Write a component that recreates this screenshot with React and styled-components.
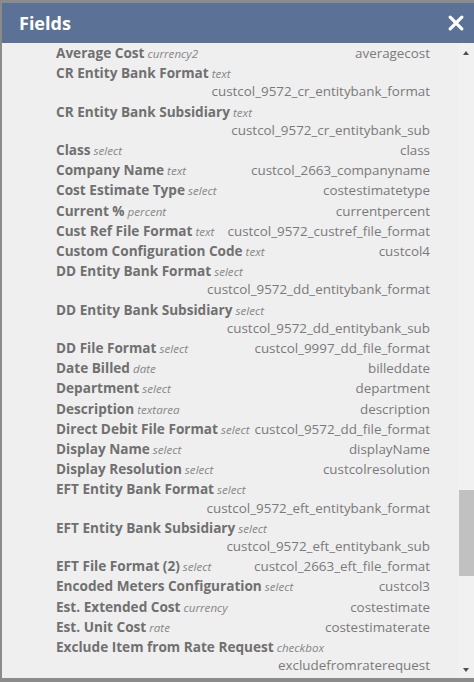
import React from "react";
import styled, { createGlobalStyle } from "styled-components";

const GlobalStyle = createGlobalStyle`
    html, body {
        margin: 0;
        padding: 0;
        background: #8b8b8b;
        font-family: "Open Sans", "Noto Sans", sans-serif;
    }
`;

const fields = [
    { name: "Average Cost", type: "currency2", id: "averagecost" },
    { name: "CR Entity Bank Format", type: "text", id: "custcol_9572_cr_entitybank_format" },
    { name: "CR Entity Bank Subsidiary", type: "text", id: "custcol_9572_cr_entitybank_sub" },
    { name: "Class", type: "select", id: "class" },
    { name: "Company Name", type: "text", id: "custcol_2663_companyname" },
    { name: "Cost Estimate Type", type: "select", id: "costestimatetype" },
    { name: "Current %", type: "percent", id: "currentpercent" },
    { name: "Cust Ref File Format", type: "text", id: "custcol_9572_custref_file_format" },
    { name: "Custom Configuration Code", type: "text", id: "custcol4" },
    { name: "DD Entity Bank Format", type: "select", id: "custcol_9572_dd_entitybank_format" },
    { name: "DD Entity Bank Subsidiary", type: "select", id: "custcol_9572_dd_entitybank_sub" },
    { name: "DD File Format", type: "select", id: "custcol_9997_dd_file_format" },
    { name: "Date Billed", type: "date", id: "billeddate" },
    { name: "Department", type: "select", id: "department" },
    { name: "Description", type: "textarea", id: "description" },
    { name: "Direct Debit File Format", type: "select", id: "custcol_9572_dd_file_format" },
    { name: "Display Name", type: "select", id: "displayName" },
    { name: "Display Resolution", type: "select", id: "custcolresolution" },
    { name: "EFT Entity Bank Format", type: "select", id: "custcol_9572_eft_entitybank_format" },
    { name: "EFT Entity Bank Subsidiary", type: "select", id: "custcol_9572_eft_entitybank_sub" },
    { name: "EFT File Format (2)", type: "select", id: "custcol_2663_eft_file_format" },
    { name: "Encoded Meters Configuration", type: "select", id: "custcol3" },
    { name: "Est. Extended Cost", type: "currency", id: "costestimate" },
    { name: "Est. Unit Cost", type: "rate", id: "costestimaterate" },
    { name: "Exclude Item from Rate Request", type: "checkbox", id: "excludefromraterequest" },
];

const Frame = styled.div`
    height: 682px;
    box-sizing: border-box;
    padding: 3px 0 4px 2px;
    display: flex;
`;

const Panel = styled.div`
    flex: 1;
    display: flex;
    flex-direction: column;
    background: #efefef;
    overflow: hidden;
`;

const Header = styled.div`
    height: 40px;
    flex-shrink: 0;
    background: #5b7296;
    display: flex;
    align-items: center;
    justify-content: space-between;
    padding: 0 9px 0 17px;
`;

const Title = styled.h1`
    margin: 0;
    color: #fff;
    font-size: 18px;
    font-weight: 700;
`;

const CloseButton = styled.button`
    border: 0;
    background: none;
    padding: 0;
    width: 18px;
    height: 18px;
    display: flex;
    align-items: center;
    justify-content: center;
    cursor: pointer;
`;

const Body = styled.div`
    flex: 1;
    display: flex;
    min-height: 0;
`;

const List = styled.div`
    flex: 1;
    overflow: hidden;
    padding: 0 28px 0 54px;
`;

const Row = styled.div`
    display: flex;
    flex-wrap: wrap;
    align-items: baseline;
    padding: 1px 0;
    line-height: 18.2px;
`;

const Label = styled.span`
    color: #707070;
    font-size: 13.6px;
    font-weight: 700;
    line-height: 18.2px;
`;

const Type = styled.span`
    color: #868686;
    font-size: 11.6px;
    font-style: italic;
    font-weight: 400;
    line-height: 1;
    margin-left: 3px;
`;

const Value = styled.span`
    margin-left: auto;
    padding-left: 2px;
    color: #7a7a7a;
    font-size: 13.4px;
    line-height: 18.2px;
`;

const Scrollbar = styled.div`
    width: 16px;
    flex-shrink: 0;
    background: #f1f1f1;
    display: flex;
    flex-direction: column;
    align-items: center;
`;

const Arrow = styled.div`
    width: 0;
    height: 0;
    margin: 8px 0 6px;
    border-left: 3.5px solid transparent;
    border-right: 3.5px solid transparent;
    ${(props) => props.down
        ? "border-top: 4px solid #505050;"
        : "border-bottom: 4px solid #505050;"}
`;

const Track = styled.div`
    flex: 1;
    align-self: stretch;
    display: flex;
    flex-direction: column;
    padding-top: ${(props) => props.offset}px;
`;

const Thumb = styled.div`
    height: 86px;
    margin-left: 1px;
    background: #c1c1c1;
`;

export default function App() {
    return (
        <Frame>
            <GlobalStyle />
            <Panel>
                <Header>
                    <Title>Fields</Title>
                    <CloseButton aria-label="Close">
                        <svg width="16" height="16" viewBox="0 0 16 16">
                            <path d="M2.2 2.2 L13.8 13.8 M13.8 2.2 L2.2 13.8" stroke="#fff" strokeWidth="3.2" strokeLinecap="round" />
                        </svg>
                    </CloseButton>
                </Header>
                <Body>
                    <List>
                        {fields.map((f) => (
                            <Row key={f.id + f.name}>
                                <Label>
                                    {f.name}
                                    <Type>{f.type}</Type>
                                </Label>
                                <Value>{f.id}</Value>
                            </Row>
                        ))}
                    </List>
                    <Scrollbar>
                        <Arrow />
                        <Track offset={429}>
                            <Thumb />
                        </Track>
                        <Arrow down />
                    </Scrollbar>
                </Body>
            </Panel>
        </Frame>
    );
}
